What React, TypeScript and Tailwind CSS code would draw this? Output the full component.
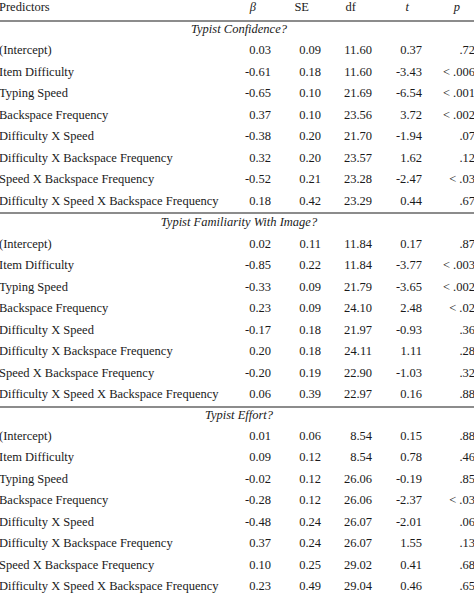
import React from 'react';

type Row = [string, string, string, string, string, string];

interface Section {
  title: string;
  rows: Row[];
}

const labels = [
  '(Intercept)',
  'Item Difficulty',
  'Typing Speed',
  'Backspace Frequency',
  'Difficulty X Speed',
  'Difficulty X Backspace Frequency',
  'Speed X Backspace Frequency',
  'Difficulty X Speed X Backspace Frequency',
];

const build = (vals: string[][]): Row[] =>
  vals.map((v, i) => [labels[i], v[0], v[1], v[2], v[3], v[4]] as Row);

const sections: Section[] = [
  {
    title: 'Typist Confidence?',
    rows: build([
      ['0.03', '0.09', '11.60', '0.37', '.72'],
      ['-0.61', '0.18', '11.60', '-3.43', '< .006'],
      ['-0.65', '0.10', '21.69', '-6.54', '< .001'],
      ['0.37', '0.10', '23.56', '3.72', '< .002'],
      ['-0.38', '0.20', '21.70', '-1.94', '.07'],
      ['0.32', '0.20', '23.57', '1.62', '.12'],
      ['-0.52', '0.21', '23.28', '-2.47', '< .03'],
      ['0.18', '0.42', '23.29', '0.44', '.67'],
    ]),
  },
  {
    title: 'Typist Familiarity With Image?',
    rows: build([
      ['0.02', '0.11', '11.84', '0.17', '.87'],
      ['-0.85', '0.22', '11.84', '-3.77', '< .003'],
      ['-0.33', '0.09', '21.79', '-3.65', '< .002'],
      ['0.23', '0.09', '24.10', '2.48', '< .02'],
      ['-0.17', '0.18', '21.97', '-0.93', '.36'],
      ['0.20', '0.18', '24.11', '1.11', '.28'],
      ['-0.20', '0.19', '22.90', '-1.03', '.32'],
      ['0.06', '0.39', '22.97', '0.16', '.88'],
    ]),
  },
  {
    title: 'Typist Effort?',
    rows: build([
      ['0.01', '0.06', '8.54', '0.15', '.88'],
      ['0.09', '0.12', '8.54', '0.78', '.46'],
      ['-0.02', '0.12', '26.06', '-0.19', '.85'],
      ['-0.28', '0.12', '26.06', '-2.37', '< .03'],
      ['-0.48', '0.24', '26.07', '-2.01', '.06'],
      ['0.37', '0.24', '26.07', '1.55', '.13'],
      ['0.10', '0.25', '29.02', '0.41', '.68'],
      ['0.23', '0.49', '29.04', '0.46', '.65'],
    ]),
  },
];

const cols = 'grid grid-cols-[230px_42px_50px_51px_50px_53px]';

// title row heights per section, tuned to the source's vertical rhythm
const titleBox = ['h-[18.5px] pb-[3px]', 'h-[19.5px] pb-[2px]', 'h-[18px] pb-[2px]'];

const DataRow: React.FC<{ row: Row }> = ({ row }) => (
  <div className={`${cols} h-[21.5px] items-center`}>
    <span className="whitespace-nowrap">{row[0]}</span>
    {row.slice(1).map((v, i) => (
      <span key={i} className="text-right whitespace-nowrap">
        {v}
      </span>
    ))}
  </div>
);

const App: React.FC = () => {
  return (
    <div className="w-[474px] h-[593px] overflow-hidden bg-white">
      <div
        className="w-[480px] -ml-[1px] text-[12.5px] leading-[15px] text-[#1a1a1a]"
        style={{ fontFamily: '"Liberation Serif", "Times New Roman", serif' }}
      >
        {/* header */}
        <div className={`${cols} h-[20px] items-start`}>
          <span>Predictors</span>
          <span className="text-right pr-[15px] italic">β</span>
          <span className="text-right pr-[12px]">SE</span>
          <span className="text-right pr-[16px]">df</span>
          <span className="text-right pr-[13px] italic">t</span>
          <span className="text-right pr-[15px] italic">p</span>
        </div>

        {sections.map((s, si) => (
          <div key={s.title}>
            <div className={`${si === 0 ? 'h-[1.5px]' : 'h-[2px]'} bg-[#8c8c8c]`} />
            <div className={`flex justify-center items-center italic ${titleBox[si]}`}>
              {s.title}
            </div>
            {s.rows.map((r) => (
              <DataRow key={r[0]} row={r} />
            ))}
          </div>
        ))}
      </div>
    </div>
  );
};

export default App;
